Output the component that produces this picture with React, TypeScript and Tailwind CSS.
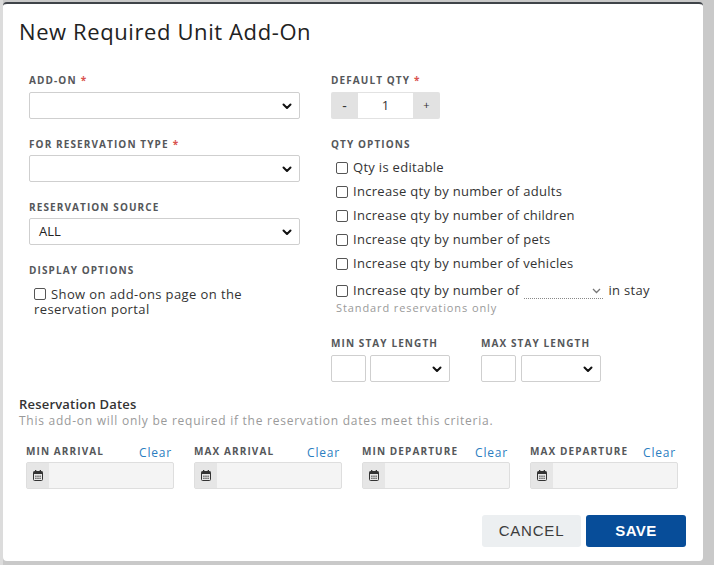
import { type ReactNode } from "react";

const FONT = { fontFamily: '"Open Sans", "Noto Sans", sans-serif' };

function Chevron({ className = "" }: { className?: string }) {
  return (
    <svg width="10" height="7" viewBox="0 0 10 7" className={className}>
      <polyline points="1.5,1.5 5,5 8.5,1.5" fill="none" stroke="#111" strokeWidth="2" strokeLinecap="round" strokeLinejoin="round" />
    </svg>
  );
}

function CalendarIcon() {
  return (
    <svg width="10" height="11" viewBox="0 0 10 11">
      <rect x="0.5" y="1.5" width="9" height="9" rx="1" fill="none" stroke="#333" />
      <rect x="0.5" y="1.5" width="9" height="2.5" fill="#333" />
      <rect x="2" y="0" width="1.3" height="2.5" fill="#333" />
      <rect x="6.7" y="0" width="1.3" height="2.5" fill="#333" />
      {[2.3, 4.4, 6.5].map((x) => [5.6, 7.7].map((y) => <rect key={`${x}-${y}`} x={x} y={y} width="1.2" height="1.2" fill="#333" />))}
    </svg>
  );
}

function Label({ children, required }: { children: ReactNode; required?: boolean }) {
  return (
    <div className="h-[14px] text-[10px] leading-[14px] font-bold tracking-[1.1px] text-[#55575a] uppercase">
      {children}
      {required && <span className="text-[#d9534f] ml-[4px]">*</span>}
    </div>
  );
}

function Select({ value = "", className = "" }: { value?: string; className?: string }) {
  return (
    <div className={`relative h-[27px] border border-[#cfcfcf] rounded-[2px] bg-white ${className}`}>
      <div className="pl-[9px] leading-[25px] text-[13px] text-[#222]">{value}</div>
      <Chevron className="absolute right-[7px] top-[10px]" />
    </div>
  );
}

function Check({ children, className = "" }: { children: ReactNode; className?: string }) {
  return (
    <label className={`flex items-center h-[24px] text-[13px] text-[#333] tracking-[0.3px] ${className}`}>
      <span className="w-[12px] h-[12px] border border-[#555] rounded-[2px] bg-white mr-[5px] shrink-0" />
      {children}
    </label>
  );
}

function DateField({ label }: { label: string }) {
  return (
    <div className="w-[148px]">
      <div className="flex items-end justify-between h-[16px] mb-[4px]">
        <Label>{label}</Label>
        <span className="text-[12px] leading-[14px] text-[#2b7ec1] tracking-[0.8px] mr-[2px] -mb-[2px]">Clear</span>
      </div>
      <div className="flex h-[27px] border border-[#dedede] rounded-[2px] bg-[#f4f4f4]">
        <div className="w-[22px] bg-[#e6e6e6] flex items-center justify-center">
          <CalendarIcon />
        </div>
        <div className="flex-1" />
      </div>
    </div>
  );
}

export default function App() {
  return (
    <div className="h-[565px] w-[714px] bg-[#c9c9c9] border-l-[3px] border-[#dcdcdc] pt-[2px] overflow-hidden" style={FONT}>
      <div className="w-[700px] h-[559px] bg-white rounded-[4px] border-t-2 border-[#3f4349] flex flex-col">
        {/* Title */}
        <h1 className="pl-[16px] pt-[14px] text-[22px] leading-[26px] text-[#222] tracking-[0.6px]">
          New Required Unit Add-On
        </h1>

        {/* Form columns */}
        <div className="grid grid-cols-[271px_1fr] gap-x-[31px] pl-[26px] pt-[29px]">
          <div className="flex flex-col">
            <Label required>Add-on</Label>
            <Select className="mt-[5px]" />
            <div className="mt-[18px]">
              <Label required>For Reservation Type</Label>
            </div>
            <Select className="mt-[4px]" />
            <div className="mt-[18px]">
              <Label>Reservation Source</Label>
            </div>
            <Select className="mt-[4px]" value="ALL" />
            <div className="mt-[18px]">
              <Label>Display Options</Label>
            </div>
            <div className="mt-[10px] pl-[5px] text-[13px] leading-[15px] text-[#333] tracking-[0.4px]">
              <span className="inline-block w-[12px] h-[12px] border border-[#555] rounded-[2px] bg-white mr-[5px] align-[-1px]" />
              Show on add-ons page on the reservation portal
            </div>
          </div>

          <div className="flex flex-col">
            <Label required>Default Qty</Label>
            <div className="mt-[5px] flex w-[109px] h-[27px] rounded-[2px] overflow-hidden text-[13px] text-[#333]">
              <div className="w-[27px] bg-[#e2e2e2] flex items-center justify-center text-[14px]">-</div>
              <div className="flex-1 bg-white border-y border-[#e2e2e2] flex items-center justify-center">1</div>
              <div className="w-[27px] bg-[#e2e2e2] flex items-center justify-center text-[11px]">+</div>
            </div>
            <div className="mt-[18px]">
              <Label>Qty Options</Label>
            </div>
            <div className="mt-[5px] pl-[5px] flex flex-col">
              <Check>Qty is editable</Check>
              <Check>Increase qty by number of adults</Check>
              <Check>Increase qty by number of children</Check>
              <Check>Increase qty by number of pets</Check>
              <Check>Increase qty by number of vehicles</Check>
              <Check className="mt-[3px]">
                Increase qty by number of
                <span className="relative ml-[5px] mr-[5px] w-[79px] h-[16px] border-b border-dotted border-[#888]">
                  <svg width="9" height="6" viewBox="0 0 9 6" className="absolute right-[2px] top-[5px]">
                    <polyline points="1,1 4.5,4.5 8,1" fill="none" stroke="#777" strokeWidth="1.3" />
                  </svg>
                </span>
                in stay
              </Check>
              <div className="-mt-[2px] text-[11px] leading-[14px] text-[#9a9a9a] tracking-[0.9px]">
                Standard reservations only
              </div>
            </div>
            <div className="mt-[21px] flex gap-[31px]">
              <div>
                <Label>Min Stay Length</Label>
                <div className="mt-[5px] flex gap-[4px]">
                  <div className="w-[35px] h-[27px] border border-[#cfcfcf] rounded-[2px]" />
                  <Select className="w-[80px]" />
                </div>
              </div>
              <div>
                <Label>Max Stay Length</Label>
                <div className="mt-[5px] flex gap-[5px]">
                  <div className="w-[35px] h-[27px] border border-[#cfcfcf] rounded-[2px]" />
                  <Select className="w-[80px]" />
                </div>
              </div>
            </div>
          </div>
        </div>

        {/* Reservation dates */}
        <div className="pl-[16px] mt-[14px]">
          <div className="text-[13px] leading-[16px] font-semibold text-[#333] tracking-[0.2px]">Reservation Dates</div>
          <div className="mt-[2px] text-[12px] leading-[14px] text-[#9a9a9a] tracking-[0.75px]">
            This add-on will only be required if the reservation dates meet this criteria.
          </div>
        </div>
        <div className="pl-[23px] mt-[14px] flex gap-[20px]">
          <DateField label="Min Arrival" />
          <DateField label="Max Arrival" />
          <DateField label="Min Departure" />
          <DateField label="Max Departure" />
        </div>

        {/* Footer buttons */}
        <div className="mt-[26px] pr-[17px] flex justify-end gap-[5px]" style={{ fontFamily: '"Liberation Sans", Arial, sans-serif' }}>
          <button className="w-[99px] h-[32px] rounded-[3px] bg-[#eceff1] text-[15px] tracking-[0.8px] text-[#3c3c3c]">CANCEL</button>
          <button className="w-[100px] h-[32px] rounded-[3px] bg-[#074d99] text-[15px] font-bold tracking-[0.4px] text-white">SAVE</button>
        </div>
      </div>
    </div>
  );
}
